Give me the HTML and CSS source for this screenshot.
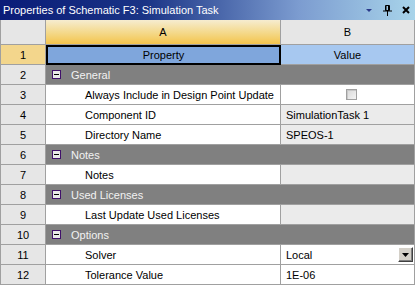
FILE: index.html
```html
<!DOCTYPE html>
<html>
<head>
<meta charset="utf-8">
<link rel="stylesheet" href="styles.css">
</head>
<body>
<div class="window">
  <div class="titlebar">
    <span class="title">Properties of Schematic F3: Simulation Task</span>
    <span class="tools">
      <svg class="tool" width="8" height="6" viewBox="0 0 8 6"><polygon points="1,2 7,2 4,5" fill="#2a3a8a"/></svg>
      <svg class="tool" width="9" height="11" viewBox="0 0 9 11"><path d="M2.5 0.5h4v5h-4z M3 1v4.5 M0 6h9 M4.5 6v5" stroke="#000" stroke-width="1" fill="none"/><rect x="5" y="1" width="1" height="4.5" fill="#000"/></svg>
      <svg class="tool" width="8" height="8" viewBox="0 0 8 8"><path d="M1 1L7 7M7 1L1 7" stroke="#000" stroke-width="2"/></svg>
    </span>
  </div>
  <div class="grid">
    <div class="rh corner"></div>
    <div class="ch ch-a">A</div>
    <div class="ch ch-b">B</div>

    <div class="rh rh-sel">1</div>
    <div class="cell head-prop">Property</div>
    <div class="cell head-val">Value</div>

    <div class="rh">2</div>
    <div class="group"><span class="minus"></span>General</div>

    <div class="rh">3</div>
    <div class="cell prop">Always Include in Design Point Update</div>
    <div class="cell val center"><span class="check"></span></div>

    <div class="rh">4</div>
    <div class="cell prop">Component ID</div>
    <div class="cell val ro">SimulationTask 1</div>

    <div class="rh">5</div>
    <div class="cell prop">Directory Name</div>
    <div class="cell val ro">SPEOS-1</div>

    <div class="rh">6</div>
    <div class="group"><span class="minus"></span>Notes</div>

    <div class="rh">7</div>
    <div class="cell prop">Notes</div>
    <div class="cell val ro"></div>

    <div class="rh">8</div>
    <div class="group"><span class="minus"></span>Used Licenses</div>

    <div class="rh">9</div>
    <div class="cell prop">Last Update Used Licenses</div>
    <div class="cell val ro"></div>

    <div class="rh">10</div>
    <div class="group"><span class="minus"></span>Options</div>

    <div class="rh">11</div>
    <div class="cell prop">Solver</div>
    <div class="cell val combo"><span>Local</span><span class="dd"><svg width="7" height="4" viewBox="0 0 7 4"><polygon points="0,0 7,0 3.5,4" fill="#000"/></svg></span></div>

    <div class="rh">12</div>
    <div class="cell prop">Tolerance Value</div>
    <div class="cell val">1E-06</div>
  </div>
</div>
</body>
</html>
```

FILE: styles.css
```css
html, body {
  margin: 0;
  padding: 0;
  background: #ffffff;
}
.window {
  width: 415px;
  height: 286px;
  overflow: hidden;
  font-family: "Liberation Sans", Arial, sans-serif;
  font-size: 11px;
  color: #000;
}
.titlebar {
  height: 20px;
  display: flex;
  align-items: center;
  justify-content: space-between;
  background: linear-gradient(to right, #0a1c78 0%, #1a3486 35%, #7c9cd0 72%, #a8d4ea 100%);
  padding: 0 3px 0 3px;
  box-sizing: border-box;
}
.title {
  color: #fff;
  font-size: 11px;
}
.tools {
  display: flex;
  align-items: center;
  gap: 10px;
  padding-right: 2px;
}
.tool {
  display: block;
}
.grid {
  display: grid;
  grid-template-columns: 45px 235px 134px;
  grid-template-rows: 25px repeat(12, 20px);
  border-left: 1px solid #a0a0a0;
}
.grid > div {
  box-sizing: border-box;
  border-right: 1px solid #a0a0a0;
  border-bottom: 1px solid #a0a0a0;
  display: flex;
  align-items: center;
  white-space: nowrap;
  overflow: hidden;
}
.rh {
  background: #e6e6e6;
  justify-content: center;
}
.rh-sel {
  background: #f3d68c;
}
.ch {
  justify-content: center;
}
.ch-a {
  background: linear-gradient(to bottom, #f6ecd0 0%, #f4d888 55%, #f4c44c 100%);
}
.ch-b {
  background: #e6e6e6;
}
.grid > .head-prop {
  background: #7fa6dc;
  justify-content: center;
  border: none;
  outline: 2px solid #000;
  outline-offset: -2px;
}
.head-val {
  background: #a7c8f0;
  justify-content: center;
}
.group {
  grid-column: 2 / 4;
  background: #808080;
  color: #f2f2f2;
}
.minus {
  width: 9px;
  height: 9px;
  box-sizing: border-box;
  border: 1px solid #40106a;
  background: #e8e8e8;
  margin: 0 10px 0 6px;
  position: relative;
}
.minus::after {
  content: "";
  position: absolute;
  left: 1px;
  top: 3px;
  width: 5px;
  height: 1px;
  background: #000;
}
.prop {
  background: #fff;
  padding-left: 39px;
}
.val {
  background: #fff;
  padding-left: 5px;
}
.ro {
  background: #ebebeb;
}
.center {
  justify-content: center;
}
.check {
  width: 11px;
  height: 11px;
  box-sizing: border-box;
  border: 1px solid #a0a0a0;
  background: linear-gradient(to bottom right, #d8d8d8, #f4f4f4);
  box-shadow: inset 1px 1px 0 #c8c8c8;
  margin-left: 3px;
}
.combo {
  justify-content: space-between;
  padding-right: 1px;
}
.dd {
  width: 15px;
  height: 15px;
  box-sizing: border-box;
  background: #d4d0c8;
  border-top: 1px solid #fff;
  border-left: 1px solid #fff;
  border-right: 1px solid #404040;
  border-bottom: 1px solid #404040;
  box-shadow: inset -1px -1px 0 #808080;
  display: flex;
  align-items: center;
  justify-content: center;
}
.dd svg {
  display: block;
}
```
